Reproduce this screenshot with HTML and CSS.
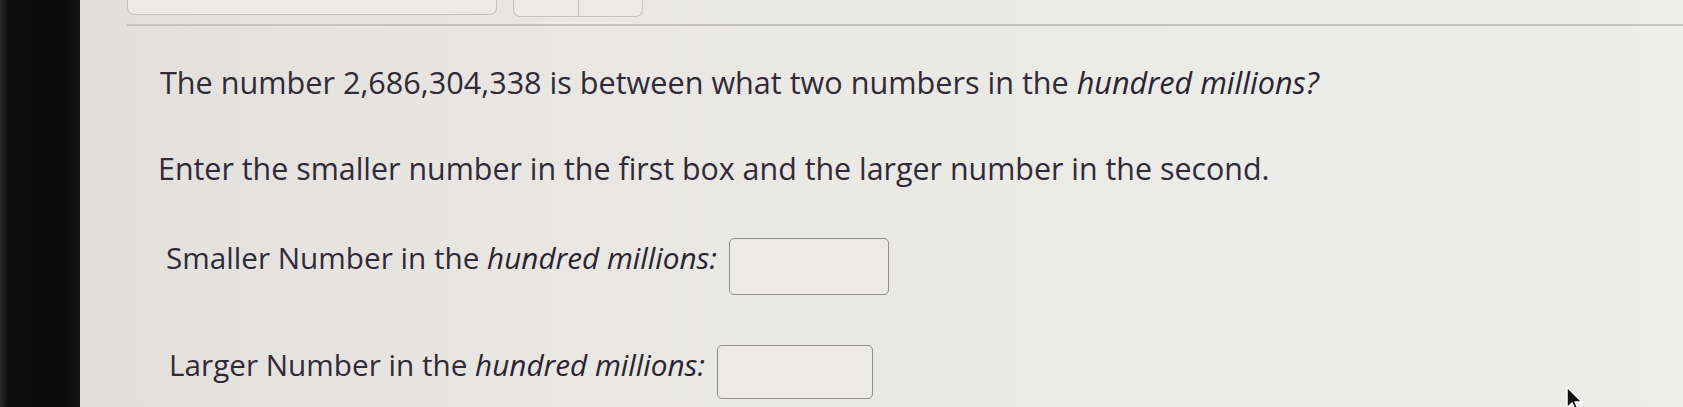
FILE: index.html
```html
<!DOCTYPE html>
<html lang="en">
<head>
<meta charset="utf-8">
<title>Question</title>
<link rel="stylesheet" href="styles.css">
</head>
<body>
<div class="screen">
  <div class="bezel"></div>
  <main class="main">
    <div class="tabs">
      <div class="tab tab-wide"></div>
      <div class="tab tab-split"><span></span><span></span></div>
    </div>
    <div class="rule"></div>
    <section class="question">
      <p class="q q1">The number 2,686,304,338 is between what two numbers in the <em>hundred millions?</em></p>
      <p class="q q2">Enter the smaller number in the first box and the larger number in the second.</p>
      <div class="row row1">
        <label class="q" for="a1">Smaller Number in the <em>hundred millions:</em></label>
        <input class="box box1" id="a1" type="text">
      </div>
      <div class="row row2">
        <label class="q" for="a2">Larger Number in the <em>hundred millions:</em></label>
        <input class="box box2" id="a2" type="text">
      </div>
    </section>
    <svg class="cursor" width="20" height="26" viewBox="0 0 20 26">
      <path d="M2 1 L2 22 L7 17 L11 25 L14 24 L10 16 L17 16 Z" fill="#111" stroke="#fff" stroke-width="1.5" stroke-linejoin="round"/>
    </svg>
  </main>
</div>
</body>
</html>
```
FILE: styles.css
```css
html, body {
  margin: 0;
  padding: 0;
  height: 100%;
  overflow: hidden;
}
body {
  background: #e6e5e1;
  font-family: "Open Sans", "Noto Sans", sans-serif;
  color: #312a37;
}
.screen {
  display: flex;
  height: 407px;
}
.bezel {
  width: 80px;
  flex: none;
  background: linear-gradient(90deg, #2a2a2a 0px, #0d0d0d 8px, #0a0a0a 64px, #161616 80px);
}
.main {
  flex: 1;
  position: relative;
  background: linear-gradient(90deg, #e1e0dc 0%, #e8e7e3 30%, #ebebe8 70%, #ededeb 100%);
  padding-left: 47px;
}
.tabs {
  display: flex;
  gap: 16px;
  height: 15px;
}
.tab {
  box-sizing: border-box;
  border: 1.5px solid #c4c3c0;
  border-top: none;
  border-radius: 0 0 7px 7px;
  background: #ebeae7;
}
.tab-wide {
  width: 370px;
}
.tab-split {
  width: 130px;
  height: 17px;
  display: flex;
}
.tab-split span {
  flex: 1;
}
.tab-split span + span {
  border-left: 1.5px solid #c4c3c0;
}
.rule {
  margin-top: 9px;
  height: 2px;
  background: #c4c3c0;
}
.question {
  padding-left: 33px;
  margin-top: 36px;
}
.q {
  font-size: 30.6px;
  line-height: 40px;
  margin: 0;
  white-space: nowrap;
}
.q em {
  font-style: italic;
  color: #2a2430;
}
.q2 {
  margin-top: 47px;
  font-size: 30.4px;
  margin-left: -2px;
}
.row {
  display: flex;
  align-items: flex-start;
}
.row .q {
  font-size: 29.7px;
}
.row1 {
  margin-top: 49px;
  padding-left: 6px;
}
.row2 {
  margin-top: 50px;
  padding-left: 9px;
}
.box {
  box-sizing: border-box;
  margin-top: 0;
  height: 57px;
  border: 1.5px solid #8f8d8e;
  border-radius: 5px;
  background: #eceae7;
  outline: none;
  padding: 0;
}
.box1 {
  width: 160px;
  margin-left: 12px;
}
.box2 {
  width: 156px;
  height: 54px;
  margin-left: 12px;
}
.cursor {
  position: absolute;
  left: 1485px;
  top: 386px;
}
```
